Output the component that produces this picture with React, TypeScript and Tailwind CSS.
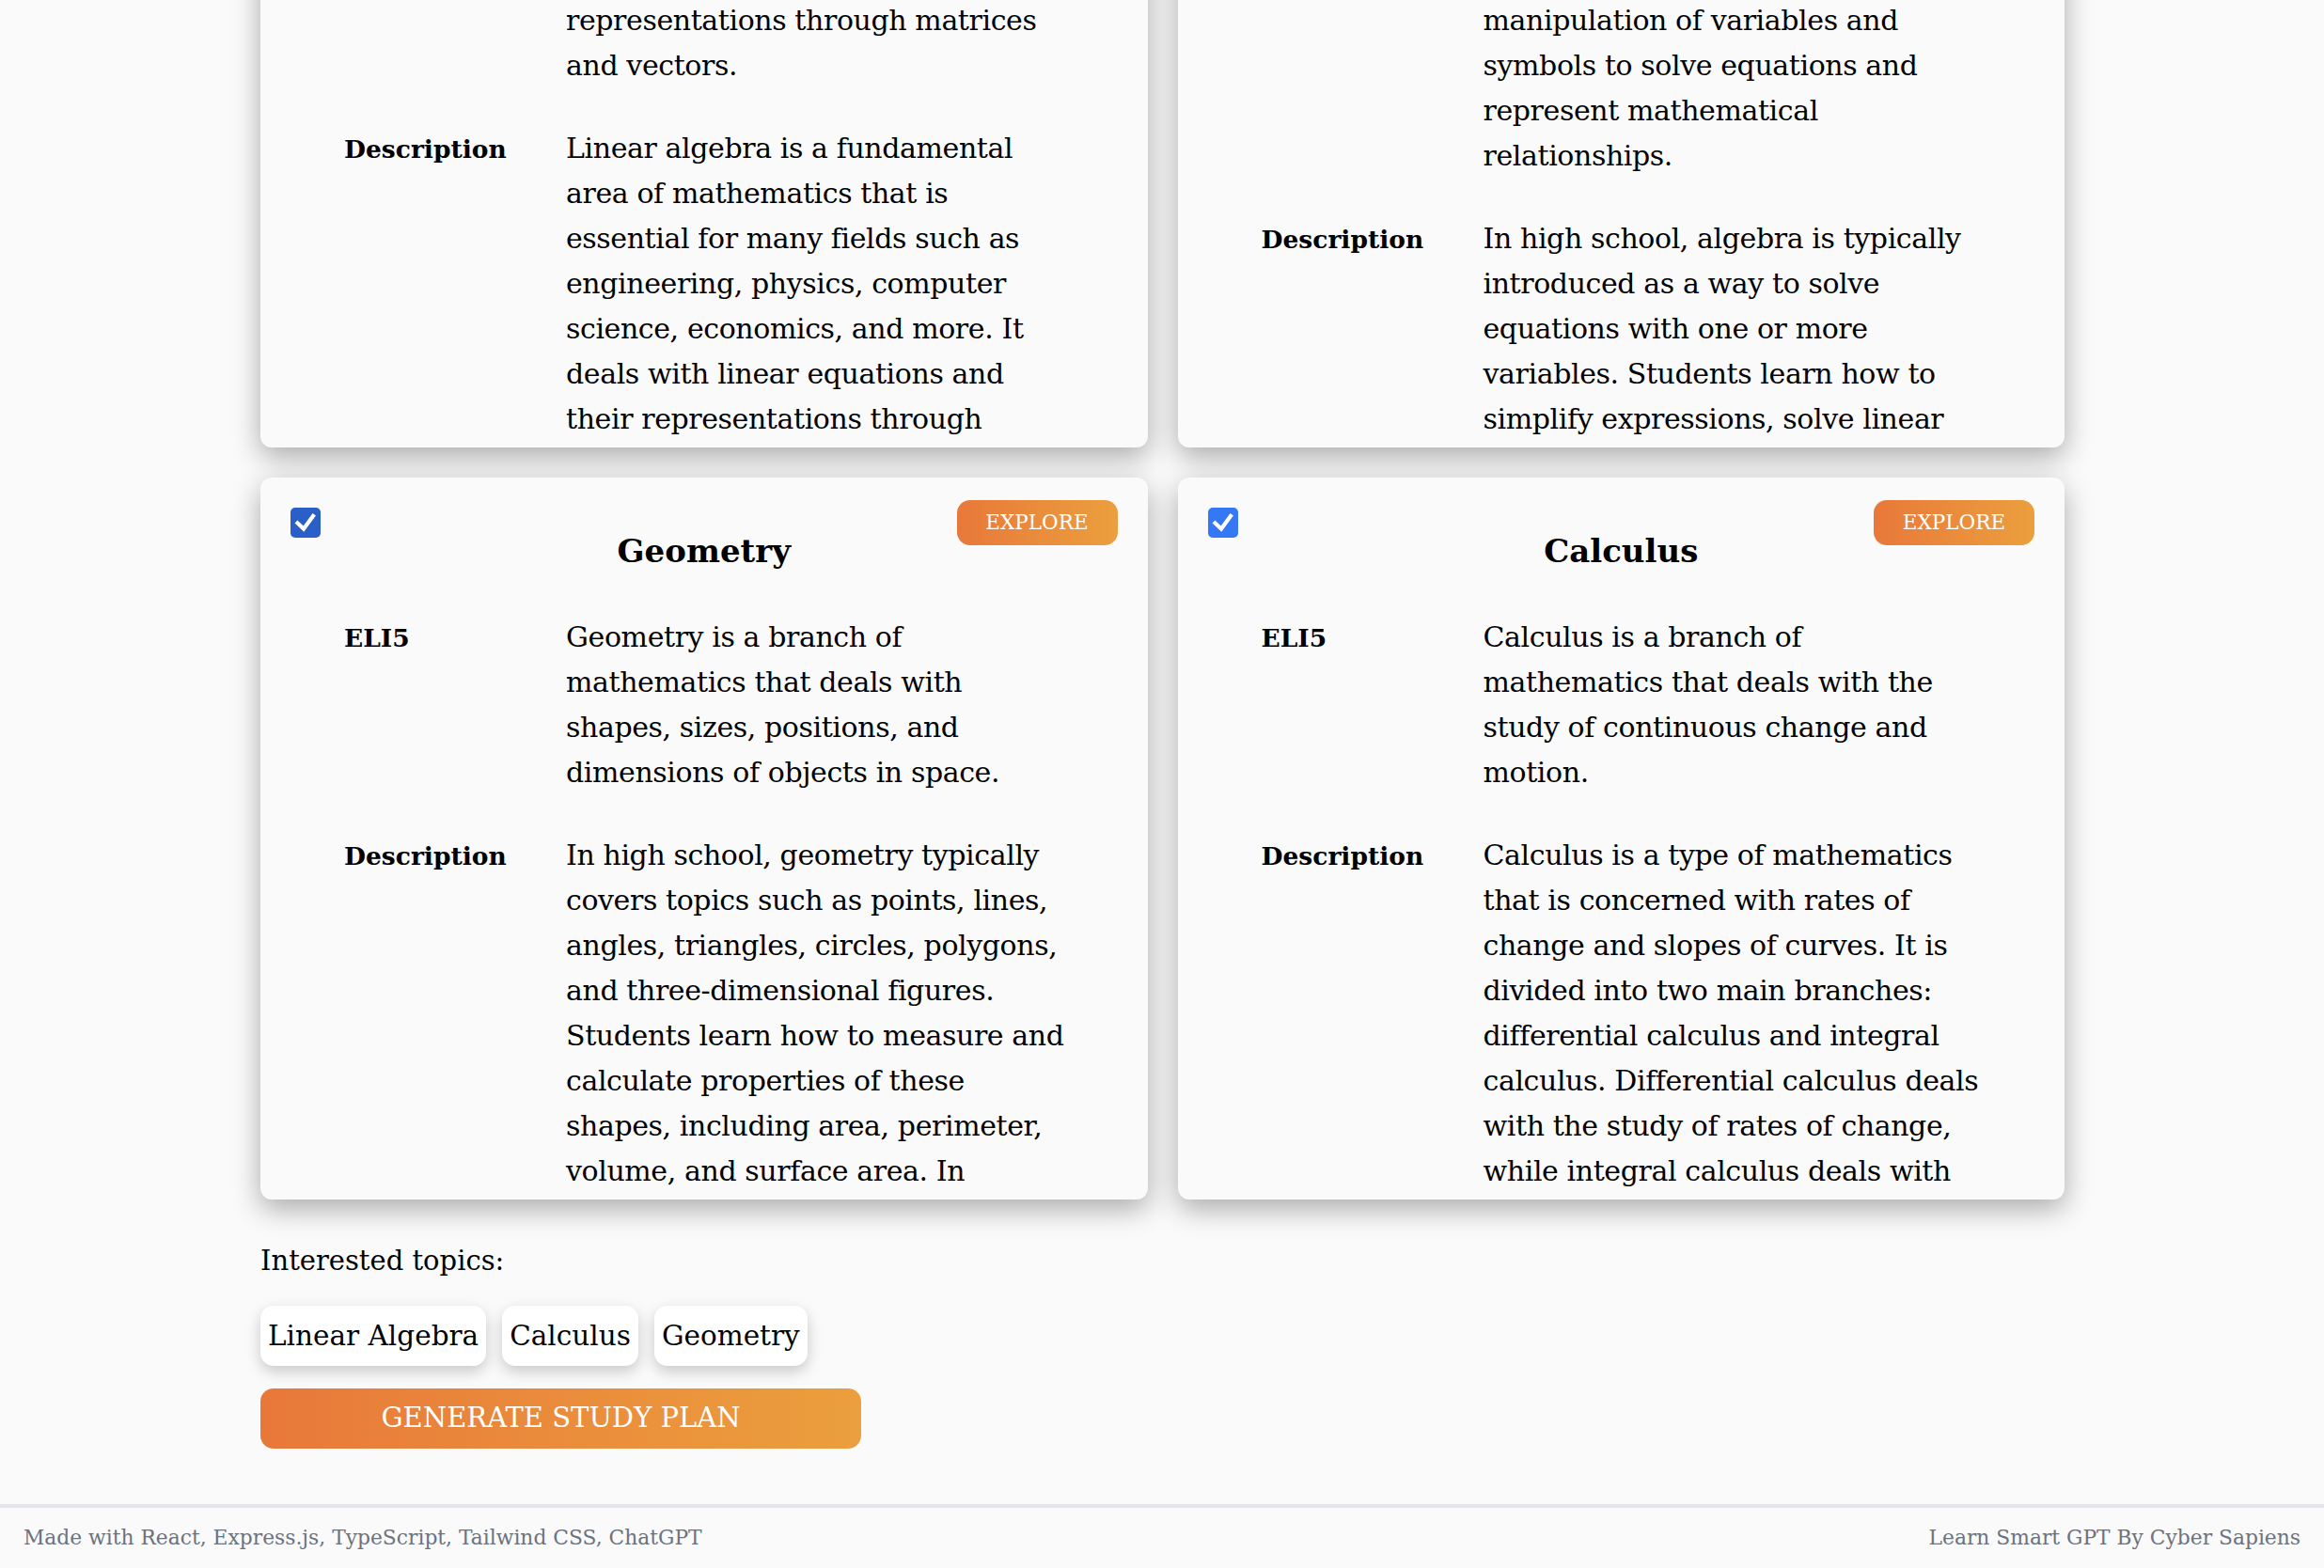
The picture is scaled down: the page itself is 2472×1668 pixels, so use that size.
import React from 'react';

type Topic = {
  title: string;
  checked: boolean;
  tone: string;
  eli5: string[];
  description: string[];
};

const topics: Topic[] = [
  {
    title: 'Linear Algebra',
    checked: true,
    tone: 'bg-[#3478f6]',
    eli5: [
      'Linear algebra is a branch of',
      'mathematics that deals with lines,',
      'planes and spaces, and their',
      'representations through matrices',
      'and vectors.',
    ],
    description: [
      'Linear algebra is a fundamental',
      'area of mathematics that is',
      'essential for many fields such as',
      'engineering, physics, computer',
      'science, economics, and more. It',
      'deals with linear equations and',
      'their representations through',
      'matrices and vectors.',
    ],
  },
  {
    title: 'Algebra',
    checked: false,
    tone: 'bg-[#3478f6]',
    eli5: [
      'Algebra is a branch of',
      'mathematics that deals with the',
      'study of rules for the',
      'manipulation of variables and',
      'symbols to solve equations and',
      'represent mathematical',
      'relationships.',
    ],
    description: [
      'In high school, algebra is typically',
      'introduced as a way to solve',
      'equations with one or more',
      'variables. Students learn how to',
      'simplify expressions, solve linear',
      'equations and inequalities, and',
      'work with functions and graphs.',
    ],
  },
  {
    title: 'Geometry',
    checked: true,
    tone: 'bg-[#2b5fc8]',
    eli5: [
      'Geometry is a branch of',
      'mathematics that deals with',
      'shapes, sizes, positions, and',
      'dimensions of objects in space.',
    ],
    description: [
      'In high school, geometry typically',
      'covers topics such as points, lines,',
      'angles, triangles, circles, polygons,',
      'and three-dimensional figures.',
      'Students learn how to measure and',
      'calculate properties of these',
      'shapes, including area, perimeter,',
      'volume, and surface area. In',
      'addition, they study proofs.',
    ],
  },
  {
    title: 'Calculus',
    checked: true,
    tone: 'bg-[#3478f6]',
    eli5: [
      'Calculus is a branch of',
      'mathematics that deals with the',
      'study of continuous change and',
      'motion.',
    ],
    description: [
      'Calculus is a type of mathematics',
      'that is concerned with rates of',
      'change and slopes of curves. It is',
      'divided into two main branches:',
      'differential calculus and integral',
      'calculus. Differential calculus deals',
      'with the study of rates of change,',
      'while integral calculus deals with',
      'accumulation of quantities.',
    ],
  },
];

const interested = ['Linear Algebra', 'Calculus', 'Geometry'];

const Checkbox = ({ checked, tone }: { checked: boolean; tone: string }) =>
  checked ? (
    <span className={`flex h-[32px] w-[32px] rounded-[5px] ${tone}`}>
      <svg viewBox="0 0 32 32" className="h-[32px] w-[32px]" fill="none">
        <path d="M7.5 16.5L14 22.5L24 9" stroke="white" strokeWidth="4.2" strokeLinecap="square" />
      </svg>
    </span>
  ) : (
    <span className="flex h-[32px] w-[32px] rounded-[5px] border-2 border-[#767676] bg-white" />
  );

const Lines = ({ lines }: { lines: string[] }) => (
  <>
    {lines.map((line) => (
      <span key={line} className="block whitespace-nowrap">
        {line}
      </span>
    ))}
  </>
);

const TopicCard = ({ topic }: { topic: Topic }) => (
  <div className="h-[768px] overflow-hidden rounded-[12px] bg-[#fafafa] px-[32px] pt-[24px] shadow-[0_10px_30px_rgba(0,0,0,0.32)]">
    <div className="grid grid-cols-[1fr_auto_1fr] items-start">
      <div className="pt-[8px]">
        <Checkbox checked={topic.checked} tone={topic.tone} />
      </div>
      <h2 className="mt-[30px] text-center text-[34px] font-bold leading-[48px] text-black">{topic.title}</h2>
      <div className="flex justify-end">
        <button className="h-[48px] w-[171px] rounded-[14px] bg-linear-to-r from-[#e8783a] to-[#eb9f3d] text-[21.5px] text-white">
          EXPLORE
        </button>
      </div>
    </div>

    <dl className="mt-[44px] grid grid-cols-[236px_1fr] items-baseline gap-y-[40px] px-[57px] text-black">
      <dt className="text-[26.5px] font-bold leading-[48px]">ELI5</dt>
      <dd className="text-[30px] leading-[48px] tracking-[-0.4px]">
        <Lines lines={topic.eli5} />
      </dd>
      <dt className="text-[26.5px] font-bold leading-[48px]">Description</dt>
      <dd className="text-[30px] leading-[48px] tracking-[-0.4px]">
        <Lines lines={topic.description} />
      </dd>
    </dl>
  </div>
);

export default function App() {
  return (
    <div className="flex min-h-screen flex-col overflow-hidden bg-[#fafafa] font-['DejaVu_Serif','Liberation_Serif',serif] text-black">
      <main className="mx-auto w-[1920px] flex-1 pl-[1px]">
        <div className="-mt-[292px] grid grid-cols-2 gap-[32px]">
          {topics.map((t) => (
            <TopicCard key={t.title} topic={t} />
          ))}
        </div>

        <p className="mt-[41px] text-[29px] leading-[48px]">Interested topics:</p>

        <div className="mt-[24px] flex gap-[17px]">
          {interested.map((name) => (
            <span
              key={name}
              className="flex h-[64px] items-center rounded-[14px] bg-white px-[8px] text-[29.5px] shadow-[0_6px_16px_rgba(0,0,0,0.2)]"
            >
              {name}
            </span>
          ))}
        </div>

        <button className="mt-[24px] h-[64px] w-[639px] rounded-[14px] bg-linear-to-r from-[#e8783a] to-[#eb9f3d] text-[29px] uppercase text-white">
          Generate Study Plan
        </button>
      </main>

      <footer className="flex h-[68px] items-center justify-between border-t-[4px] border-[#e6e6ea] px-[25px] pt-[1px] text-[21.8px] text-[#6b7280]">
        <span>Made with React, Express.js, TypeScript, Tailwind CSS, ChatGPT</span>
        <span>Learn Smart GPT By Cyber Sapiens</span>
      </footer>
    </div>
  );
}
